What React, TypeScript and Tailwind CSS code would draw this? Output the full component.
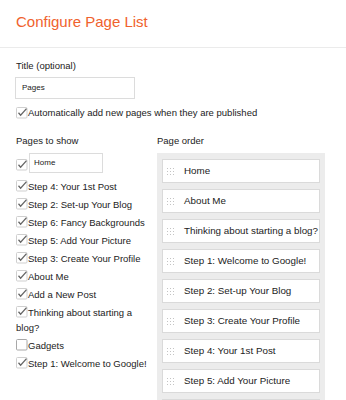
import React from 'react';

const showPages = [
  'Step 4: Your 1st Post',
  'Step 2: Set-up Your Blog',
  'Step 6: Fancy Backgrounds',
  'Step 5: Add Your Picture',
  'Step 3: Create Your Profile',
  'About Me',
  'Add a New Post',
  'Thinking about starting a blog?',
];

const orderPages = [
  'Home',
  'About Me',
  'Thinking about starting a blog?',
  'Step 1: Welcome to Google!',
  'Step 2: Set-up Your Blog',
  'Step 3: Create Your Profile',
  'Step 4: Your 1st Post',
  'Step 5: Add Your Picture',
  'Step 6: Fancy Backgrounds',
  'Add a New Post',
];

function Check({ checked = true }: { checked?: boolean }) {
  return (
    <svg width="12" height="12" viewBox="0 0 12 12" className="inline-block shrink-0 align-[-2px]">
      <rect
        x="0.5"
        y="0.5"
        width="10.5"
        height="10.5"
        fill="#fff"
        stroke={checked ? '#cfcfcf' : '#a8a8a8'}
        rx="1"
      />
      {checked && (
        <path d="M2.5 5.8 L4.6 8.2 L10.5 1.6" fill="none" stroke="#666" strokeWidth="1.3" />
      )}
    </svg>
  );
}

function Grip() {
  return (
    <svg width="8" height="8" viewBox="0 0 8 8" className="shrink-0">
      {[0, 3, 6].map((x) =>
        [0, 3, 6].map((y) => (
          <rect key={`${x}-${y}`} x={x} y={y + 1} width="1" height="1" fill="#c4c4c4" />
        ))
      )}
    </svg>
  );
}

export default function App() {
  return (
    <div className="w-[346px] h-[400px] overflow-hidden bg-white text-[#222] font-['Liberation_Sans',Arial,sans-serif]">
      <div className="h-[48px] border-b border-[#ebebeb] pl-4 pt-[13px]">
        <h1 className="text-[15px] leading-[18px] text-[#f0622d]">Configure Page List</h1>
      </div>

      <div className="px-4">
        <div className="mt-[12px] text-[9.5px] leading-[12px]">Title (optional)</div>
        <div className="mt-[5px] -ml-px w-[120px] h-[22px] border border-[#dcdcdc] flex items-center pl-[6px] text-[8px]">
          Pages
        </div>
        <label className="mt-[8px] flex items-center text-[9.5px] leading-[12px]">
          <Check />
          <span>Automatically add new pages when they are published</span>
        </label>

        <div className="mt-[16px] flex">
          <div className="w-[141px] shrink-0">
            <div className="text-[9.5px] leading-[12px]">Pages to show</div>
            <div className="mt-[6px] flex items-start gap-px">
              <div className="-mt-px">
                <Check />
              </div>
              <div className="w-[74px] h-[20px] border border-[#dcdcdc] flex items-center pl-[4px] text-[8px]">
                Home
              </div>
            </div>
            <div className="mt-[1px] text-[9.5px] leading-[15px]">
              {showPages.map((p) => (
                <div key={p} className="py-[1.5px]">
                  <Check />
                  <span>{p}</span>
                </div>
              ))}
              <div className="py-[1.5px]">
                <Check checked={false} />
                <span>Gadgets</span>
              </div>
              <div className="py-[1.5px]">
                <Check />
                <span>Step 1: Welcome to Google!</span>
              </div>
            </div>
          </div>

          <div className="flex-1">
            <div className="text-[9.5px] leading-[12px]">Page order</div>
            <div className="mt-[6px] w-[168px] h-[300px] bg-[#ececec] px-[5px] pt-[6px] flex flex-col gap-[6px]">
              {orderPages.map((p) => (
                <div
                  key={p}
                  className="h-[24px] shrink-0 bg-white border border-[#dadada] flex items-center pl-[4px] gap-[9px] text-[9.8px] whitespace-nowrap"
                >
                  <Grip />
                  <span>{p}</span>
                </div>
              ))}
            </div>
          </div>
        </div>
      </div>
    </div>
  );
}
